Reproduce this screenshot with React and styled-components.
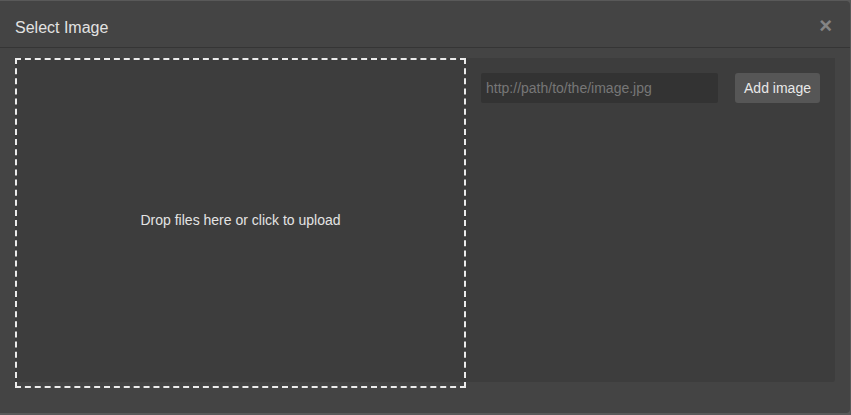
import styled, { createGlobalStyle } from 'styled-components';

const GlobalStyle = createGlobalStyle`
  html, body {
    margin: 0;
    padding: 0;
    background: #595959;
    font-family: "Liberation Sans", Arial, sans-serif;
  }
`;

const Dialog = styled.div`
  width: 850px;
  height: 412px;
  margin-top: 1px;
  background: #444444;
  border-radius: 0 4px 4px 0;
  display: flex;
  flex-direction: column;
`;

const Header = styled.div`
  height: 46px;
  flex: none;
  display: flex;
  align-items: center;
  justify-content: space-between;
  padding: 0 18px 0 15px;
  border-bottom: 1px solid #353535;
`;

const Title = styled.h3`
  margin: 7px 0 0;
  font-size: 16px;
  font-weight: normal;
  color: #e2e2e2;
`;

const Close = styled.button`
  border: 0;
  background: none;
  padding: 0;
  margin: 4px 0 0;
  font-family: "Liberation Sans", Arial, sans-serif;
  font-size: 22px;
  font-weight: bold;
  line-height: 1;
  color: #848484;
  cursor: pointer;
`;

const Body = styled.div`
  flex: 1;
  padding: 10px 15px 24px;
`;

const Panel = styled.div`
  height: 324px;
  background: #3d3d3d;
  border-radius: 0 0 3px 0;
  display: flex;
  align-items: flex-start;
`;

const DropZone = styled.div`
  width: 451px;
  height: 330px;
  flex: none;
  box-sizing: border-box;
  border: 2px dashed #ececec;
  padding-bottom: 7px;
  display: flex;
  align-items: center;
  justify-content: center;
  font-size: 14px;
  color: #e4e4e4;
  cursor: pointer;
`;

const UrlForm = styled.div`
  flex: 1;
  display: flex;
  gap: 17px;
  padding: 15px;
`;

const UrlInput = styled.input`
  flex: 1;
  min-width: 0;
  height: 30px;
  box-sizing: border-box;
  border: 0;
  border-radius: 2px;
  background: #333333;
  padding: 0 5px;
  font-family: "Liberation Sans", Arial, sans-serif;
  font-size: 14px;
  color: #ddd;
  outline: none;

  &::placeholder {
    color: #777777;
  }
`;

const AddButton = styled.button`
  width: 85px;
  height: 30px;
  flex: none;
  border: 0;
  border-radius: 3px;
  background: #565656;
  font-family: "Liberation Sans", Arial, sans-serif;
  font-size: 14px;
  color: #e8e8e8;
  padding: 0;
  cursor: pointer;
`;

export default function App() {
  return (
    <>
      <GlobalStyle />
      <Dialog>
        <Header>
          <Title>Select Image</Title>
          <Close aria-label="Close">×</Close>
        </Header>
        <Body>
          <Panel>
            <DropZone>Drop files here or click to upload</DropZone>
            <UrlForm>
              <UrlInput placeholder="http://path/to/the/image.jpg" />
              <AddButton>Add image</AddButton>
            </UrlForm>
          </Panel>
        </Body>
      </Dialog>
    </>
  );
}
